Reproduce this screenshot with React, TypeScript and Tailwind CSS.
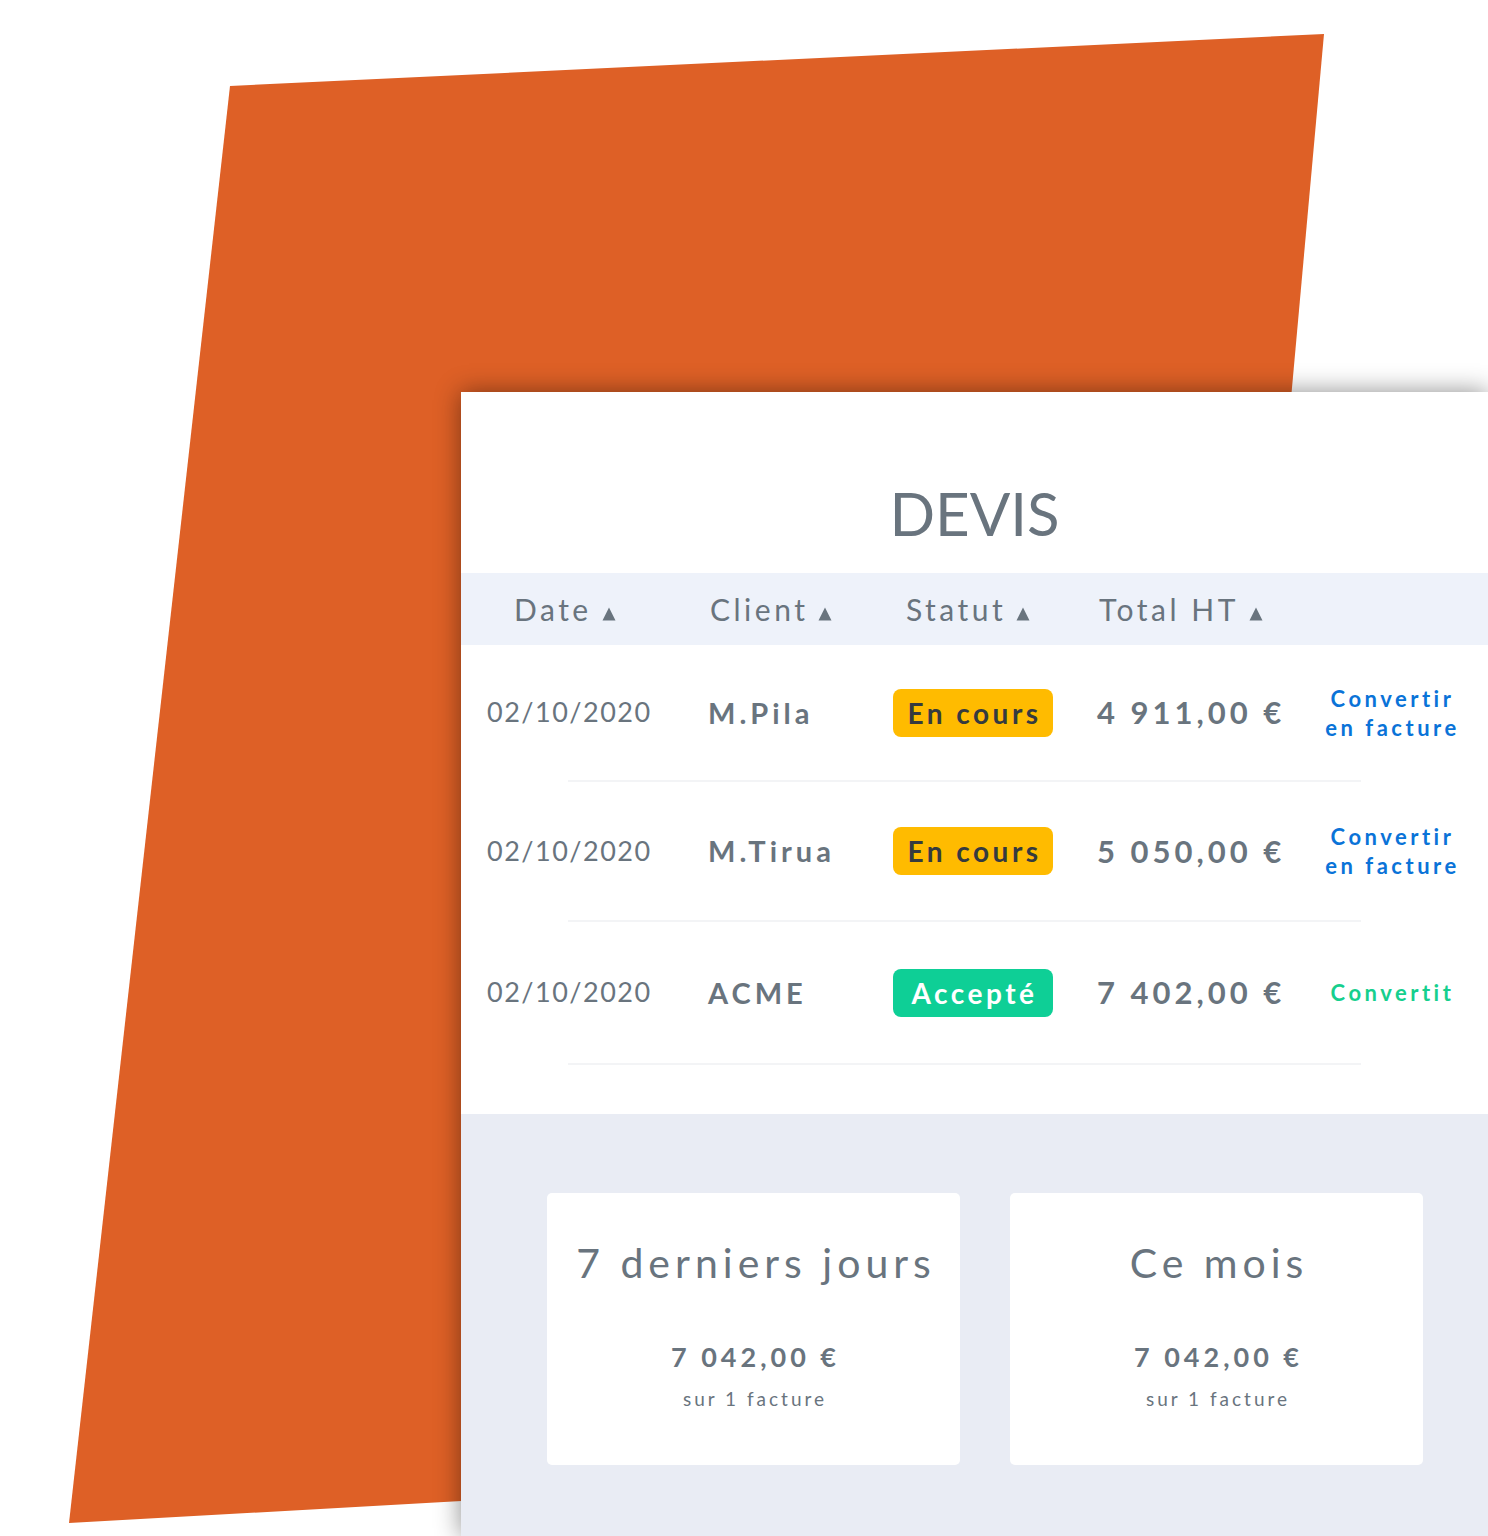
import React from "react";

const TXT = "text-[#69747e]";

function Tri() {
  return (
    <svg className="inline-block ml-[10px] align-baseline" width="14" height="14" viewBox="0 0 14 14">
      <polygon points="7,0.5 13.5,13.5 0.5,13.5" fill="#69747e" />
    </svg>
  );
}

type Row = {
  date: string;
  client: string;
  status: "cours" | "ok";
  amount: string;
  h: string;
};

const rows: Row[] = [
  { date: "02/10/2020", client: "M.Pila", status: "cours", amount: "4 911,00 €", h: "h-[135px]" },
  { date: "02/10/2020", client: "M.Tirua", status: "cours", amount: "5 050,00 €", h: "h-[138px]" },
  { date: "02/10/2020", client: "ACME", status: "ok", amount: "7 402,00 €", h: "h-[141px]" },
];

function StatCard({ title }: { title: string }) {
  return (
    <div className="w-[413px] h-[272px] bg-white rounded-[5px] flex flex-col items-center">
      <div className={`mt-[44px] text-[41px] leading-[52px] tracking-[5px] pl-[5px] ${TXT}`}>{title}</div>
      <div className={`mt-[51px] text-[27px] leading-[34px] font-bold tracking-[4px] pl-[4px] ${TXT}`}>7 042,00 €</div>
      <div className={`mt-[13px] text-[19px] leading-[24px] tracking-[3px] pl-[3px] ${TXT}`}>sur 1 facture</div>
    </div>
  );
}

export default function App() {
  return (
    <div
      className="relative w-[1488px] h-[1536px] overflow-hidden bg-white"
      style={{ fontFamily: "Lato, 'Open Sans', sans-serif" }}
    >
      <svg className="absolute left-0 top-0" width="1488" height="1536" viewBox="0 0 1488 1536">
        <polygon points="230,86 1324,34 1195,1460 69,1523" fill="#de6026" />
      </svg>

      <div className="relative pl-[461px] pt-[392px]">
        <div className="w-[1027px] h-[1144px] bg-white shadow-[0_0_24px_rgba(0,0,0,0.45)]">
          {/* title */}
          <div className="h-[181px] flex items-center justify-center pt-[60px]">
            <h1 className={`text-[60px] leading-[60px] font-normal ${TXT}`}>DEVIS</h1>
          </div>

          {/* header */}
          <div className={`h-[72px] bg-[#eef2fa] flex items-center pl-[53px] text-[30px] tracking-[3.5px] ${TXT}`}>
            <div className="w-[196px]">Date<Tri /></div>
            <div className="w-[196px]">Client<Tri /></div>
            <div className="w-[193px]">Statut<Tri /></div>
            <div>Total HT<Tri /></div>
          </div>

          {/* rows */}
          {rows.map((r, i) => (
            <React.Fragment key={i}>
              <div className={`${r.h} flex items-center pl-[26px]`}>
                <div className={`w-[221px] text-[27px] tracking-[1.5px] ${TXT}`}>{r.date}</div>
                <div className={`w-[185px] text-[29px] font-bold tracking-[4px] ${TXT}`}>{r.client}</div>
                <div className="w-[204px]">
                  {r.status === "cours" ? (
                    <div className="w-[160px] h-[48px] rounded-[8px] bg-[#ffbb00] flex items-center justify-center pl-[3px] text-[28px] font-bold tracking-[3.5px] text-[#353a3f]">
                      En cours
                    </div>
                  ) : (
                    <div className="w-[160px] h-[48px] rounded-[8px] bg-[#0ecf96] flex items-center justify-center pl-[3px] text-[28px] font-bold tracking-[3.5px] text-white">
                      Accepté
                    </div>
                  )}
                </div>
                <div className={`w-[228px] whitespace-nowrap text-[31px] font-bold tracking-[4px] ${TXT}`}>{r.amount}</div>
                <div className="w-[132px] flex justify-center">
                  {r.status === "cours" ? (
                    <div className="whitespace-nowrap text-center text-[22px] leading-[29px] font-bold tracking-[3.5px] pl-[3px] text-[#0a73d8]">
                      Convertir
                      <br />
                      en facture
                    </div>
                  ) : (
                    <div className="whitespace-nowrap text-center text-[22px] font-bold tracking-[3.5px] pl-[3px] text-[#16cf8e]">Convertit</div>
                  )}
                </div>
              </div>
              <div className="ml-[107px] w-[793px] h-[2px] bg-[#f3f4f6]" />
            </React.Fragment>
          ))}

          <div className="h-[49px]" />

          {/* stats */}
          <div className="h-[422px] bg-[#e9ecf4] pt-[79px] pl-[86px] flex gap-[50px]">
            <StatCard title="7 derniers jours" />
            <StatCard title="Ce mois" />
          </div>
        </div>
      </div>
    </div>
  );
}
